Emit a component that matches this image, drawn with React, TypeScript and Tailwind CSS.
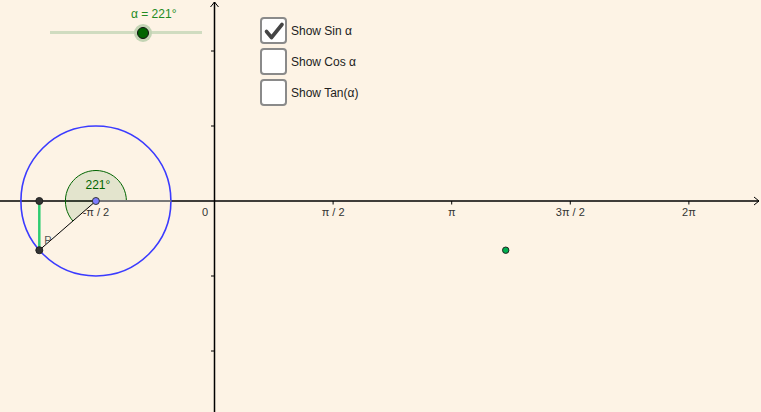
import React from 'react'

const ox = 214.5
const oy = 201
const unit = 75.5
const cx = ox - (Math.PI / 2) * unit
const r = 75
const alpha = (221 * Math.PI) / 180
const px = cx + r * Math.cos(alpha)
const py = oy - r * Math.sin(alpha)
const sr = 30.5
const sx = cx + sr * Math.cos(alpha)
const sy = oy - sr * Math.sin(alpha)
const gx = ox + alpha * unit

const xTicks = [
    { v: Math.PI / 2, label: 'π / 2' },
    { v: Math.PI, label: 'π' },
    { v: (3 * Math.PI) / 2, label: '3π / 2' },
    { v: 2 * Math.PI, label: '2π' },
]

const yTicks = [51, 126, 276, 351]

function Graph() {
    return (
        <svg width="761" height="412" className="absolute inset-0">
            {/* axes */}
            <line x1="0" y1={oy} x2="759" y2={oy} stroke="#000" strokeWidth="1.5" />
            <polyline points="754,197 759,201 754,205" fill="none" stroke="#000" strokeWidth="1" />
            <line x1={ox} y1="2" x2={ox} y2="412" stroke="#000" strokeWidth="1.5" />
            <polyline points={`${ox - 4},7 ${ox},2 ${ox + 4},7`} fill="none" stroke="#000" strokeWidth="1" />
            {yTicks.map((y) => (
                <line key={y} x1={ox - 3.5} y1={y} x2={ox} y2={y} stroke="#000" strokeWidth="1" />
            ))}
            {xTicks.map((t) => (
                <g key={t.label}>
                    <line x1={ox + t.v * unit} y1={oy} x2={ox + t.v * unit} y2={oy + 3.5} stroke="#000" strokeWidth="1" />
                    <text x={ox + t.v * unit} y="215.5" textAnchor="middle" fontSize="11" fill="#333">
                        {t.label}
                    </text>
                </g>
            ))}
            <text x="205" y="215.5" textAnchor="middle" fontSize="11" fill="#333">0</text>
            <text x={cx} y="215.5" textAnchor="middle" fontSize="11" fill="#333">-π / 2</text>

            {/* angle sector */}
            <path
                d={`M ${cx} ${oy} L ${cx + sr} ${oy} A ${sr} ${sr} 0 1 0 ${sx} ${sy} Z`}
                fill="rgba(0,100,0,0.1)"
                stroke="none"
            />
            <path
                d={`M ${cx + sr} ${oy} A ${sr} ${sr} 0 1 0 ${sx} ${sy}`}
                fill="none"
                stroke="#006400"
                strokeWidth="1"
            />
            <text x={cx + 2} y="189" textAnchor="middle" fontSize="12" fill="#006400">221°</text>

            {/* unit circle */}
            <circle cx={cx} cy={oy} r={r} fill="none" stroke="#3b3bff" strokeWidth="1.6" />
            <line x1={cx} y1={oy} x2={cx + r} y2={oy} stroke="#777" strokeWidth="2" />
            <line x1={cx} y1={oy} x2={px} y2={py} stroke="#000" strokeWidth="1" />
            <line x1={px} y1={oy} x2={px} y2={py} stroke="#2ecc71" strokeWidth="2.5" />
            <text x={px + 5} y="244" fontSize="11" fill="#555">P</text>

            <circle cx={px} cy={oy} r="3.5" fill="#333" stroke="#222" strokeWidth="1" />
            <circle cx={px} cy={py} r="3.5" fill="#333" stroke="#222" strokeWidth="1" />
            <circle cx={cx} cy={oy} r="3.5" fill="#7d7dff" stroke="#333" strokeWidth="1" />

            {/* (alpha, sin alpha) */}
            <circle cx={gx} cy={py} r="3.2" fill="#00b050" stroke="#222" strokeWidth="1" />
        </svg>
    )
}

function Slider() {
    return (
        <>
            <div className="absolute left-[131px] top-[6px] text-[12px] leading-[16px] text-[#228b22]">α = 221°</div>
            <div className="absolute left-[50px] top-[31px] w-[152px] h-[3px] bg-[#d0dcc0]">
                <div className="absolute left-[84px] top-[-7.5px] w-[18px] h-[18px] rounded-full bg-[#c3d4b4] flex items-center justify-center">
                    <div className="w-[12px] h-[12px] rounded-full bg-[#006400] border border-[#111]" />
                </div>
            </div>
        </>
    )
}

function CheckBox({ label, checked }: { label: string; checked?: boolean }) {
    return (
        <div className="flex items-center gap-[4px] h-[27px]">
            <div className="w-[27px] h-[27px] rounded-[4px] border-2 border-[#8a8a8a] bg-white flex items-center justify-center">
                {checked && (
                    <svg width="22" height="22" viewBox="0 0 22 22">
                        <path d="M3.5 11.5 L8.5 17.5 L19 4.5" fill="none" stroke="#444" strokeWidth="3.6" strokeLinecap="round" strokeLinejoin="round" />
                    </svg>
                )}
            </div>
            <span className="text-[12px] text-[#222]">{label}</span>
        </div>
    )
}

export default function App() {
    return (
        <div className="relative w-[761px] h-[412px] overflow-hidden bg-[#fdf3e5] font-['Liberation_Sans',sans-serif]">
            <Graph />
            <Slider />
            <div className="absolute left-[260px] top-[17px] flex flex-col gap-[4px]">
                <CheckBox label="Show Sin α" checked />
                <CheckBox label="Show Cos α" />
                <CheckBox label="Show Tan(α)" />
            </div>
        </div>
    )
}
